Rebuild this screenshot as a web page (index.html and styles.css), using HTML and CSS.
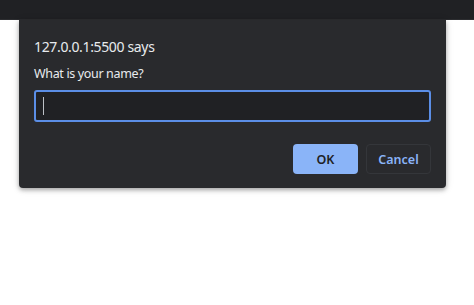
FILE: index.html
```html
<!DOCTYPE html>
<html lang="en">
<head>
    <meta charset="UTF-8">
    <meta name="viewport" content="width=device-width, initial-scale=1.0">
    <title>Prompt</title>
    <link rel="stylesheet" href="styles.css">
</head>
<body>
    <div class="top-bar"></div>
    <div class="dialog">
        <div class="dialog-title">127.0.0.1:5500 says</div>
        <div class="dialog-message">What is your name?</div>
        <div class="prompt-input"><span class="caret"></span></div>
        <div class="dialog-buttons">
            <button class="btn btn-ok">OK</button>
            <button class="btn btn-cancel">Cancel</button>
        </div>
    </div>
</body>
</html>
```

FILE: styles.css
```css
*{
    padding: 0;
    margin: 0;
    box-sizing: border-box;
}
body{
    background-color: #ffffff;
    font-family: "Noto Sans", "Open Sans", sans-serif;
}
.top-bar{
    height: 20px;
    background-color: #202124;
    border-bottom: 1px solid #2c2d30;
}
.dialog{
    position: absolute;
    top: 20px;
    left: 19px;
    width: 427px;
    height: 168px;
    padding: 17px 15px 0 15px;
    background-color: #292a2d;
    border-radius: 0 0 4px 4px;
    box-shadow: 0 2px 4px rgba(0, 0, 0, 0.3), 0 1px 8px rgba(0, 0, 0, 0.12);
    display: flex;
    flex-direction: column;
}
.dialog-title{
    font-size: 14px;
    line-height: 20px;
    letter-spacing: -0.35px;
    color: #e8eaed;
}
.dialog-message{
    margin-top: 8px;
    font-size: 12.5px;
    line-height: 18px;
    letter-spacing: -0.35px;
    color: #e8eaed;
}
.prompt-input{
    margin-top: 7px;
    height: 32px;
    background-color: #202124;
    border: 2px solid #5b8ee6;
    border-radius: 3px;
    padding: 5px 0 0 7px;
}
.caret{
    display: block;
    width: 1px;
    height: 18px;
    background-color: #bdc1c6;
}
.dialog-buttons{
    margin-top: 22px;
    display: flex;
    justify-content: flex-end;
    column-gap: 8px;
}
.btn{
    width: 65px;
    height: 30px;
    border-radius: 4px;
    font-family: "Noto Sans", "Open Sans", sans-serif;
    font-size: 12.5px;
    font-weight: 600;
}
.btn-ok{
    background-color: #8ab4f8;
    border: none;
    color: #202124;
}
.btn-cancel{
    background-color: #292a2d;
    border: 1px solid #34363a;
    color: #8ab4f8;
}
```
